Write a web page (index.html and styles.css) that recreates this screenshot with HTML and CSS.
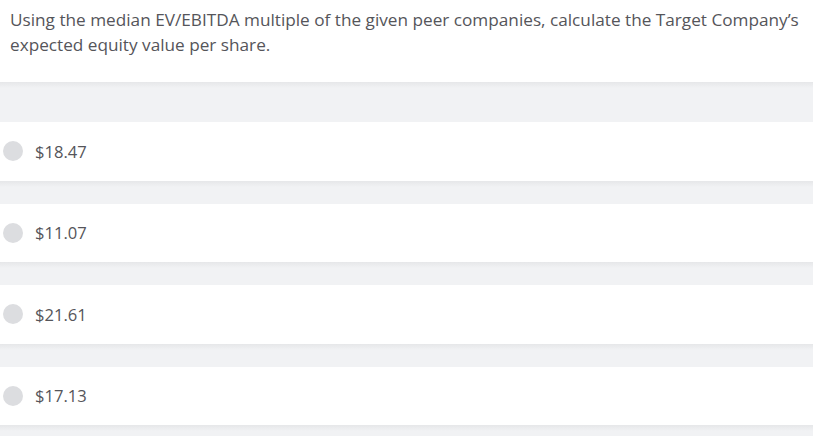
FILE: index.html
```html
<!DOCTYPE html>
<html>
<head>
<meta charset="utf-8">
<link rel="stylesheet" href="styles.css">
</head>
<body>
<div class="question">Using the median EV/EBITDA multiple of the given peer companies, calculate the Target Company’s expected equity value per share.</div>
<div class="options">
  <div class="gap first"></div>
  <div class="option"><span class="radio"></span><span class="label">$18.47</span></div>
  <div class="gap"></div>
  <div class="option"><span class="radio"></span><span class="label">$11.07</span></div>
  <div class="gap"></div>
  <div class="option"><span class="radio"></span><span class="label">$21.61</span></div>
  <div class="gap"></div>
  <div class="option"><span class="radio"></span><span class="label">$17.13</span></div>
  <div class="gap"></div>
</div>
</body>
</html>
```

FILE: styles.css
```css
html, body {
  margin: 0;
  padding: 0;
  background: #f1f2f4;
  font-family: "Open Sans", "Noto Sans", sans-serif;
  color: #55555a;
}
.question {
  background: #fff;
  font-size: 17.2px;
  line-height: 25px;
  padding: 7px 10px 0 10px;
  height: 75px;
}
.options {
  display: flex;
  flex-direction: column;
}
.gap {
  height: 23px;
  background: linear-gradient(#e6e7e9, #f1f2f4 6px);
}
.gap.first {
  height: 40px;
}
.option {
  background: #fff;
  height: 58.5px;
  display: flex;
  align-items: center;
  gap: 12px;
  padding-left: 3px;
}
.radio {
  width: 20px;
  height: 20px;
  border-radius: 50%;
  background: #dcdde0;
}
.label {
  font-size: 16.6px;
}
```
